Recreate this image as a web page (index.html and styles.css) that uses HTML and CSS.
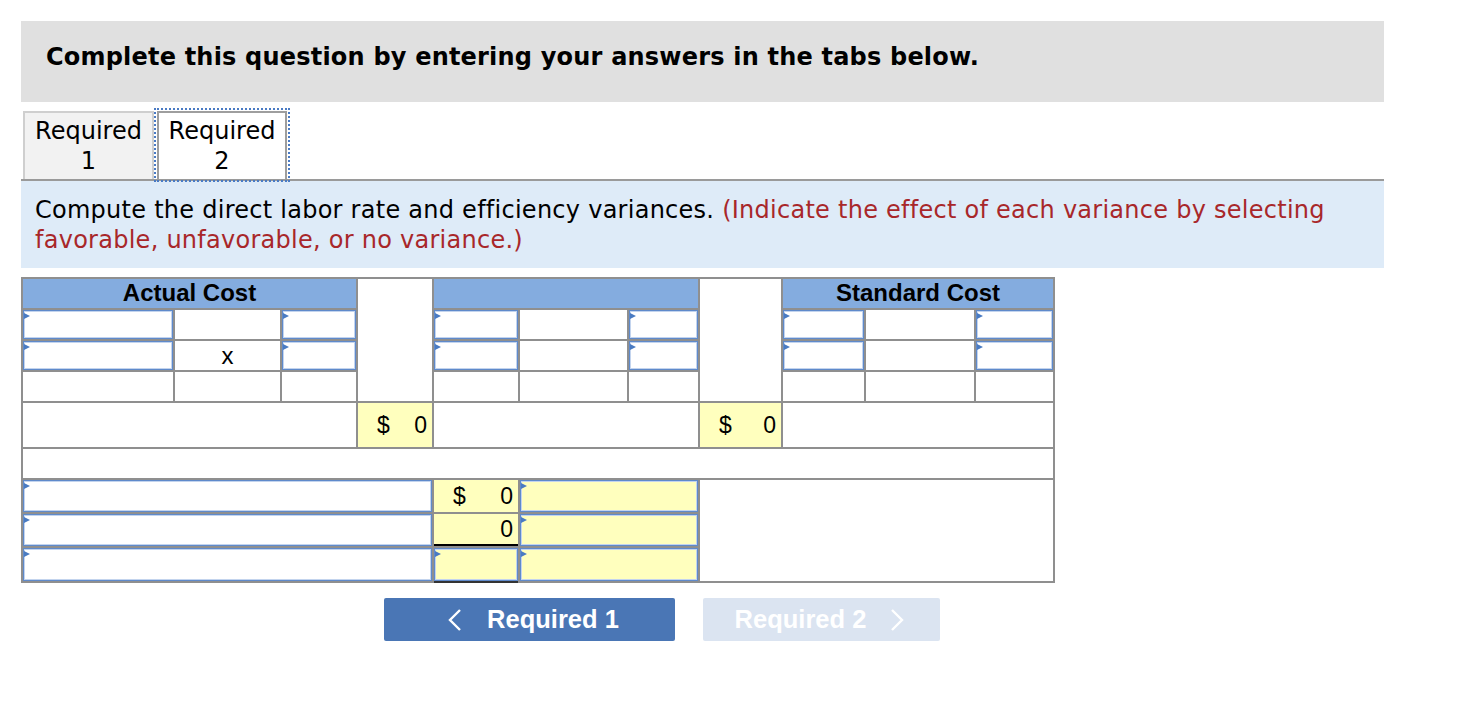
FILE: index.html
```html
<!DOCTYPE html>
<html>
<head>
<meta charset="utf-8">
<link rel="stylesheet" href="styles.css">
</head>
<body>
<div class="page">
  <div class="banner">Complete this question by entering your answers in the tabs below.</div>
  <div class="tabs">
    <div class="tab tab-inactive">Required<br>1</div>
    <div class="tab tab-active">Required<br>2</div>
  </div>
  <div class="instructions">
    <p class="line">Compute the direct labor rate and efficiency variances. <span class="red">(Indicate the effect of each variance by selecting</span></p>
    <p class="line red">favorable, unfavorable, or no variance.)</p>
  </div>
  <div class="sheet">
    <div class="c hdr hdr-a">Actual Cost</div>
    <div class="c spacer-d"></div>
    <div class="c hdr hdr-e"></div>
    <div class="c spacer-h"></div>
    <div class="c hdr hdr-i">Standard Cost</div>

    <div class="c in r2 c1"></div>
    <div class="c r2 c2"></div>
    <div class="c in r2 c3"></div>
    <div class="c in r2 c5"></div>
    <div class="c r2 c6"></div>
    <div class="c in r2 c7"></div>
    <div class="c in r2 c9"></div>
    <div class="c r2 c10"></div>
    <div class="c in r2 c11"></div>

    <div class="c in r3 c1"></div>
    <div class="c r3 c2 mid">x</div>
    <div class="c in r3 c3"></div>
    <div class="c in r3 c5"></div>
    <div class="c r3 c6"></div>
    <div class="c in r3 c7"></div>
    <div class="c in r3 c9"></div>
    <div class="c r3 c10"></div>
    <div class="c in r3 c11"></div>

    <div class="c r4 c1"></div>
    <div class="c r4 c2"></div>
    <div class="c r4 c3"></div>
    <div class="c r4 c5"></div>
    <div class="c r4 c6"></div>
    <div class="c r4 c7"></div>
    <div class="c r4 c9"></div>
    <div class="c r4 c10"></div>
    <div class="c r4 c11"></div>

    <div class="c r5 span-a"></div>
    <div class="c r5 c4 yel money"><span>$</span><span>0</span></div>
    <div class="c r5 span-e"></div>
    <div class="c r5 c8 yel money"><span>$</span><span>0</span></div>
    <div class="c r5 span-i"></div>

    <div class="c r6 span-all"></div>

    <div class="c in r7 span-ad"></div>
    <div class="c r7 c5 yel money"><span>$</span><span>0</span></div>
    <div class="c in yel r7 span-fg"></div>
    <div class="c right-block"></div>

    <div class="c in r8 span-ad"></div>
    <div class="c r8 c5 yel money total-top"><span></span><span>0</span></div>
    <div class="c in yel r8 span-fg"></div>

    <div class="c in r9 span-ad"></div>
    <div class="c in yel r9 c5 dbl"></div>
    <div class="c in yel r9 span-fg"></div>
  </div>
  <div class="nav">
    <button class="btn btn-prev">
      <svg class="chev" width="14" height="24" viewBox="0 0 14 24"><polyline points="12,2 2,12 12,22" fill="none" stroke="#fff" stroke-width="2.4"/></svg>
      <span>Required 1</span>
    </button>
    <button class="btn btn-next">
      <span>Required 2</span>
      <svg class="chev" width="14" height="24" viewBox="0 0 14 24"><polyline points="2,2 12,12 2,22" fill="none" stroke="#fff" stroke-width="2.4"/></svg>
    </button>
  </div>
</div>
</body>
</html>
```

FILE: styles.css
```css
html, body {
  margin: 0;
  padding: 0;
  background: #fff;
}
.page {
  padding: 21px 0 0 21px;
  width: 1363px;
  font-family: "DejaVu Sans", Verdana, sans-serif;
  color: #000;
}
.banner {
  background: #e0e0e0;
  height: 81px;
  box-sizing: border-box;
  padding: 21px 0 0 25px;
  font-weight: bold;
  font-size: 24px;
  line-height: 30px;
  letter-spacing: 0.2px;
}
.tabs {
  display: flex;
  align-items: flex-end;
  height: 77px;
  padding-left: 2px;
  border-bottom: 2px solid #9a9a9a;
}
.tab {
  box-sizing: border-box;
  height: 68px;
  font-size: 24px;
  line-height: 30px;
  text-align: center;
  padding-top: 3px;
}
.tab-inactive {
  width: 131px;
  background: #f2f2f2;
  border: 2px solid #cfcfcf;
  border-bottom: none;
}
.tab-active {
  width: 130px;
  height: 68px;
  margin-left: 3px;
  background: #fff;
  border: 2px solid #9e9e9e;
  border-bottom: none;
  outline: 2px dotted #4a7bc4;
  outline-offset: 1px;
}
.instructions {
  background: #deebf8;
  height: 87px;
  box-sizing: border-box;
  padding: 14px 14px 0 14px;
  font-size: 24px;
  line-height: 30px;
  letter-spacing: 0.26px;
}
.line {
  margin: 0;
  white-space: nowrap;
}
.red {
  color: #a8272a;
}
.sheet {
  margin-top: 9px;
  display: grid;
  width: max-content;
  grid-template-columns: 150px 105px 74px 74px 84px 107px 69px 81px 81px 108px 77px;
  grid-template-rows: 29px 29px 29px 29px 44px 29px 32px 32px 33px;
  gap: 2px;
  padding: 2px;
  background: #8f8f8f;
  font-family: "Liberation Sans", Arial, sans-serif;
  font-size: 23px;
}
.c {
  background: #fff;
  position: relative;
  box-sizing: border-box;
}
.hdr {
  background: #84acdf;
  font-weight: bold;
  font-size: 24px;
  text-align: center;
  line-height: 28px;
}
.hdr-a { grid-column: 1 / 4; grid-row: 1; }
.hdr-e { grid-column: 5 / 8; grid-row: 1; }
.hdr-i { grid-column: 9 / 12; grid-row: 1; }
.spacer-d { grid-column: 4; grid-row: 1 / 5; }
.spacer-h { grid-column: 8; grid-row: 1 / 5; }
.r2 { grid-row: 2; }
.r3 { grid-row: 3; }
.r4 { grid-row: 4; }
.r5 { grid-row: 5; }
.r6 { grid-row: 6; }
.r7 { grid-row: 7; }
.r8 { grid-row: 8; }
.r9 { grid-row: 9; }
.c1 { grid-column: 1; }
.c2 { grid-column: 2; }
.c3 { grid-column: 3; }
.c4 { grid-column: 4; }
.c5 { grid-column: 5; }
.c6 { grid-column: 6; }
.c7 { grid-column: 7; }
.c8 { grid-column: 8; }
.c9 { grid-column: 9; }
.c10 { grid-column: 10; }
.c11 { grid-column: 11; }
.span-a { grid-column: 1 / 4; }
.span-e { grid-column: 5 / 8; }
.span-i { grid-column: 9 / 12; }
.span-all { grid-column: 1 / 12; }
.span-ad { grid-column: 1 / 5; }
.span-fg { grid-column: 6 / 8; }
.right-block { grid-column: 8 / 12; grid-row: 7 / 10; }
.mid {
  text-align: center;
  font-size: 24px;
  line-height: 30px;
}
.in {
  border: 1px solid #5f8acb;
  box-shadow: inset 0 0 0 1px #c3d4ee;
}
.in::before {
  content: "";
  position: absolute;
  top: 2px;
  left: 0;
  border-left: 6px solid #4a7bc2;
  border-top: 3px solid transparent;
  border-bottom: 3px solid transparent;
}
.yel {
  background: #ffffbe;
}
.money {
  display: flex;
  justify-content: space-between;
  align-items: center;
  padding: 0 5px 0 19px;
  font-size: 23px;
}
.total-top {
  border-bottom: 2px solid #000;
}
.dbl {
  box-shadow: inset 0 0 0 1px #c3d4ee, 0 2px 0 0 #333;
}
.nav {
  display: flex;
  gap: 28px;
  padding: 15px 0 0 363px;
}
.btn {
  display: flex;
  align-items: center;
  justify-content: center;
  height: 43px;
  border: none;
  border-radius: 2px;
  font-family: "Liberation Sans", Arial, sans-serif;
  font-weight: bold;
  font-size: 25.5px;
  color: #fff;
  padding: 0;
}
.btn-prev {
  width: 291px;
  background: #4a76b5;
  gap: 25px;
  padding-left: 8px;
}
.btn-next {
  width: 237px;
  background: #dbe4f1;
  gap: 24px;
  padding-right: 4px;
}
.chev {
  display: block;
}
```
